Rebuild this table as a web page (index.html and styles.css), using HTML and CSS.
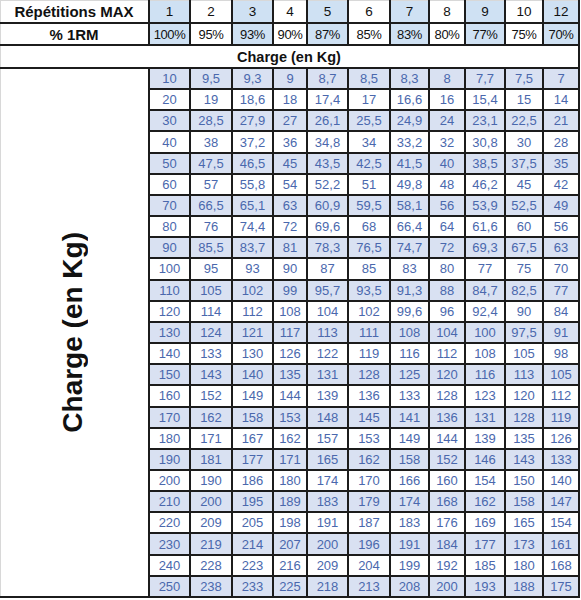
FILE: index.html
```html
<!DOCTYPE html>
<html lang="fr">
<head>
<meta charset="utf-8">
<title>Répétitions MAX — % 1RM</title>
<link rel="stylesheet" href="styles.css">
</head>
<body>
<div class="sheet">
  <div class="row head">
    <div class="lab top">Répétitions MAX</div>
    <div class="hi top">1</div><div class="top">2</div><div class="hi top">3</div><div class="top">4</div><div class="hi top">5</div><div class="top">6</div><div class="hi top">7</div><div class="top">8</div><div class="hi top">9</div><div class="top">10</div><div class="hi top">12</div>
  </div>
  <div class="row head pct">
    <div class="lab">% 1RM</div>
    <div class="hi">100%</div><div>95%</div><div class="hi">93%</div><div>90%</div><div class="hi">87%</div><div>85%</div><div class="hi">83%</div><div>80%</div><div class="hi">77%</div><div>75%</div><div class="hi">70%</div>
  </div>
  <div class="title">Charge (en Kg)</div>
  <div class="side"><span>Charge (en Kg)</span></div>
  <div class="row data alt"><div>10</div><div>9,5</div><div>9,3</div><div>9</div><div>8,7</div><div>8,5</div><div>8,3</div><div>8</div><div>7,7</div><div>7,5</div><div>7</div></div>
  <div class="row data"><div>20</div><div>19</div><div>18,6</div><div>18</div><div>17,4</div><div>17</div><div>16,6</div><div>16</div><div>15,4</div><div>15</div><div>14</div></div>
  <div class="row data alt"><div>30</div><div>28,5</div><div>27,9</div><div>27</div><div>26,1</div><div>25,5</div><div>24,9</div><div>24</div><div>23,1</div><div>22,5</div><div>21</div></div>
  <div class="row data"><div>40</div><div>38</div><div>37,2</div><div>36</div><div>34,8</div><div>34</div><div>33,2</div><div>32</div><div>30,8</div><div>30</div><div>28</div></div>
  <div class="row data alt"><div>50</div><div>47,5</div><div>46,5</div><div>45</div><div>43,5</div><div>42,5</div><div>41,5</div><div>40</div><div>38,5</div><div>37,5</div><div>35</div></div>
  <div class="row data"><div>60</div><div>57</div><div>55,8</div><div>54</div><div>52,2</div><div>51</div><div>49,8</div><div>48</div><div>46,2</div><div>45</div><div>42</div></div>
  <div class="row data alt"><div>70</div><div>66,5</div><div>65,1</div><div>63</div><div>60,9</div><div>59,5</div><div>58,1</div><div>56</div><div>53,9</div><div>52,5</div><div>49</div></div>
  <div class="row data"><div>80</div><div>76</div><div>74,4</div><div>72</div><div>69,6</div><div>68</div><div>66,4</div><div>64</div><div>61,6</div><div>60</div><div>56</div></div>
  <div class="row data alt"><div>90</div><div>85,5</div><div>83,7</div><div>81</div><div>78,3</div><div>76,5</div><div>74,7</div><div>72</div><div>69,3</div><div>67,5</div><div>63</div></div>
  <div class="row data"><div>100</div><div>95</div><div>93</div><div>90</div><div>87</div><div>85</div><div>83</div><div>80</div><div>77</div><div>75</div><div>70</div></div>
  <div class="row data alt"><div>110</div><div>105</div><div>102</div><div>99</div><div>95,7</div><div>93,5</div><div>91,3</div><div>88</div><div>84,7</div><div>82,5</div><div>77</div></div>
  <div class="row data"><div>120</div><div>114</div><div>112</div><div>108</div><div>104</div><div>102</div><div>99,6</div><div>96</div><div>92,4</div><div>90</div><div>84</div></div>
  <div class="row data alt"><div>130</div><div>124</div><div>121</div><div>117</div><div>113</div><div>111</div><div>108</div><div>104</div><div>100</div><div>97,5</div><div>91</div></div>
  <div class="row data"><div>140</div><div>133</div><div>130</div><div>126</div><div>122</div><div>119</div><div>116</div><div>112</div><div>108</div><div>105</div><div>98</div></div>
  <div class="row data alt"><div>150</div><div>143</div><div>140</div><div>135</div><div>131</div><div>128</div><div>125</div><div>120</div><div>116</div><div>113</div><div>105</div></div>
  <div class="row data"><div>160</div><div>152</div><div>149</div><div>144</div><div>139</div><div>136</div><div>133</div><div>128</div><div>123</div><div>120</div><div>112</div></div>
  <div class="row data alt"><div>170</div><div>162</div><div>158</div><div>153</div><div>148</div><div>145</div><div>141</div><div>136</div><div>131</div><div>128</div><div>119</div></div>
  <div class="row data"><div>180</div><div>171</div><div>167</div><div>162</div><div>157</div><div>153</div><div>149</div><div>144</div><div>139</div><div>135</div><div>126</div></div>
  <div class="row data alt"><div>190</div><div>181</div><div>177</div><div>171</div><div>165</div><div>162</div><div>158</div><div>152</div><div>146</div><div>143</div><div>133</div></div>
  <div class="row data"><div>200</div><div>190</div><div>186</div><div>180</div><div>174</div><div>170</div><div>166</div><div>160</div><div>154</div><div>150</div><div>140</div></div>
  <div class="row data alt"><div>210</div><div>200</div><div>195</div><div>189</div><div>183</div><div>179</div><div>174</div><div>168</div><div>162</div><div>158</div><div>147</div></div>
  <div class="row data"><div>220</div><div>209</div><div>205</div><div>198</div><div>191</div><div>187</div><div>183</div><div>176</div><div>169</div><div>165</div><div>154</div></div>
  <div class="row data alt"><div>230</div><div>219</div><div>214</div><div>207</div><div>200</div><div>196</div><div>191</div><div>184</div><div>177</div><div>173</div><div>161</div></div>
  <div class="row data"><div>240</div><div>228</div><div>223</div><div>216</div><div>209</div><div>204</div><div>199</div><div>192</div><div>185</div><div>180</div><div>168</div></div>
  <div class="row data alt"><div>250</div><div>238</div><div>233</div><div>225</div><div>218</div><div>213</div><div>208</div><div>200</div><div>193</div><div>188</div><div>175</div></div>
</div>
</body>
</html>
```

FILE: styles.css
```css
html, body {
  margin: 0;
  padding: 0;
  background: #ffffff;
}

body {
  font-family: "Liberation Sans", Arial, sans-serif;
}

.sheet {
  display: grid;
  grid-template-columns: 148px 39px 40px 39px 32px 39px 40px 37px 34px 38px 36px 34px;
  grid-template-rows: 22px 20px 21px repeat(25, 19.16px);
  gap: 2px;
  width: 578px;
  padding: 0 2px 2px 0;
  background: #1c1c1c;
}

.row {
  display: contents;
}

.row > div,
.title,
.side {
  display: flex;
  align-items: center;
  justify-content: center;
  background: #ffffff;
  white-space: nowrap;
  overflow: hidden;
}

.head > div {
  font-size: 13.5px;
  color: #111111;
}

.pct > div {
  font-size: 13px;
  letter-spacing: -0.4px;
}

.head > .hi {
  background: #cfe1f3;
}

.head > .lab {
  font-weight: bold;
  font-size: 15px;
  letter-spacing: 0;
  box-shadow: inset 1px 0 #d8d8d8;
}

.head > .top {
  box-shadow: inset 0 1px #d8d8d8;
}

.head > .lab.top {
  box-shadow: inset 1px 1px #d8d8d8;
}

.title {
  grid-column: 1 / -1;
  font-weight: bold;
  font-size: 14.5px;
  color: #111111;
  box-shadow: inset 1px 0 #d8d8d8;
}

.side {
  grid-column: 1;
  grid-row: 4 / span 25;
  box-shadow: inset 1px 0 #d8d8d8;
}

.side span {
  writing-mode: vertical-rl;
  transform: rotate(180deg);
  font-weight: bold;
  font-size: 28px;
  color: #111111;
  margin-right: 2px;
}

.data > div {
  font-size: 13px;
  color: #4a68ad;
}

.data.alt > div {
  background: #d9e1f2;
}
```
